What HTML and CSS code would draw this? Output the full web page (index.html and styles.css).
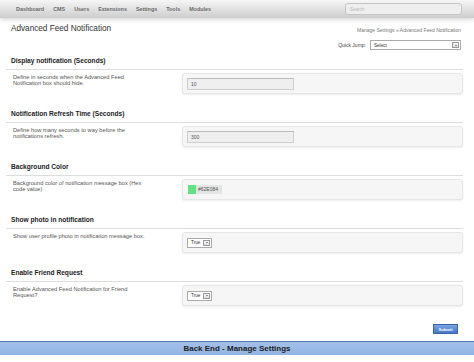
FILE: index.html
```html
<!DOCTYPE html>
<html lang="en">
<head>
    <meta charset="UTF-8">
    <meta name="viewport" content="width=device-width, initial-scale=1.0">
    <title>Manage Settings - Advanced Feed Notification</title>
    <link rel="stylesheet" href="styles.css">
</head>
<body>

    <!-- Top menu -->
    <div class="topbar">
        <ul class="menu">
            <li>Dashboard</li>
            <li>CMS</li>
            <li>Users</li>
            <li>Extensions</li>
            <li>Settings</li>
            <li>Tools</li>
            <li>Modules</li>
        </ul>
        <input type="text" class="search" placeholder="Search">
    </div>

    <div class="page-head">
        <h1>Advanced Feed Notification</h1>
        <div class="page-tools">
            <div class="crumbs">Manage Settings &raquo; Advanced Feed Notification</div>
            <div class="jump">
                <span>Quick Jump:</span>
                <div class="select wide"><span>Select</span><i class="arrow"></i></div>
            </div>
        </div>
    </div>

    <form class="settings">
        <div class="setting">
            <h2>Display notification (Seconds)</h2>
            <div class="setting-row">
                <p class="setting-desc">Define in seconds when the Advanced Feed Notification box should hide.</p>
                <div class="setting-field"><input type="text" class="text-input" value="10"></div>
            </div>
        </div>

        <div class="setting">
            <h2>Notification Refresh Time (Seconds)</h2>
            <div class="setting-row">
                <p class="setting-desc">Define how many seconds to way before the notifications refresh.</p>
                <div class="setting-field"><input type="text" class="text-input" value="300"></div>
            </div>
        </div>

        <div class="setting">
            <h2>Background Color</h2>
            <div class="setting-row">
                <p class="setting-desc">Background color of notification message box (Hex code value)</p>
                <div class="setting-field">
                    <span class="swatch"></span><span class="hex">#62E084</span>
                </div>
            </div>
        </div>

        <div class="setting">
            <h2>Show photo in notification</h2>
            <div class="setting-row">
                <p class="setting-desc">Show user profile photo in notification message box.</p>
                <div class="setting-field">
                    <div class="select"><span>True</span><i class="arrow"></i></div>
                </div>
            </div>
        </div>

        <div class="setting">
            <h2>Enable Friend Request</h2>
            <div class="setting-row">
                <p class="setting-desc">Enable Advanced Feed Notification for Friend Request?</p>
                <div class="setting-field">
                    <div class="select"><span>True</span><i class="arrow"></i></div>
                </div>
            </div>
        </div>

        <div class="actions">
            <button type="submit">Submit</button>
        </div>
    </form>

    <!-- Footer bar -->
    <div class="footer">Back End - Manage Settings</div>

</body>
</html>
```

FILE: styles.css
```css
body {
    margin: 0;
    background-color: #FFFFFF;
    font-family: 'Liberation Sans', Arial, sans-serif;
    color: #333;
}

.topbar {
    height: 18px;
    display: flex;
    align-items: center;
    justify-content: space-between;
    padding: 0 12px 0 16px;
    background: linear-gradient(#f6f6f6, #cdcdcd);
    box-shadow: 0 2px 4px rgba(0, 0, 0, 0.15);
}

.menu {
    display: flex;
    gap: 9px;
    margin: 0;
    padding: 0;
    list-style: none;
    font-size: 5.4px;
    font-weight: bold;
    color: #6a6a6a;
}

.search {
    width: 117px;
    height: 12px;
    box-sizing: border-box;
    padding: 0 4px;
    border: 1px solid #c6c6c6;
    border-radius: 3px;
    background-color: #eeeeee;
    font-family: inherit;
    font-size: 4.5px;
}

.search::placeholder {
    color: #bbb;
}

.page-head {
    display: flex;
    justify-content: space-between;
    padding: 6px 13px 0 11px;
}

h1 {
    margin: 0;
    font-size: 8.2px;
    font-weight: normal;
    line-height: 10px;
    color: #333;
}

.page-tools {
    display: flex;
    flex-direction: column;
    align-items: flex-end;
    gap: 7px;
    padding-top: 3px;
    font-size: 5px;
    color: #777;
}

.jump {
    display: flex;
    align-items: center;
    gap: 4px;
    color: #444;
}

/* fake select box */
.select {
    display: inline-flex;
    align-items: center;
    justify-content: space-between;
    height: 10px;
    box-sizing: border-box;
    padding: 0 1px 0 3px;
    gap: 3px;
    border: 1px solid #aaa;
    background-color: #fff;
    font-size: 4.6px;
    color: #333;
}

.select.wide {
    width: 91px;
}

.arrow {
    width: 7px;
    height: 6px;
    box-sizing: border-box;
    border: 1px solid #999;
    background: linear-gradient(#fafafa, #ddd);
    position: relative;
}

.arrow::after {
    content: "";
    position: absolute;
    left: 1.5px;
    top: 1.5px;
    border-left: 1.5px solid transparent;
    border-right: 1.5px solid transparent;
    border-top: 1.5px solid #333;
}

.settings {
    margin: 7px 11px 0 6px;
}

.setting {
    margin-bottom: 16px;
}

h2 {
    margin: 0;
    padding: 0 0 4px 5px;
    border-bottom: 1px solid #dddddd;
    font-size: 6.6px;
    line-height: 8px;
    color: #222;
}

.setting-row {
    display: flex;
    margin-top: 3px;
}

.setting-desc {
    flex: 0 0 135px;
    margin: 2px 34px 0 7px;
    font-size: 5.7px;
    line-height: 5.8px;
    color: #555;
}

.setting-field {
    flex: 1;
    display: flex;
    align-items: center;
    height: 21px;
    box-sizing: border-box;
    padding: 0 4px;
    border: 1px solid #e6e6e6;
    border-radius: 3px;
    background-color: #f6f6f6;
    box-shadow: 0 1px 2px rgba(0, 0, 0, 0.08);
}

.text-input {
    width: 107px;
    height: 12px;
    box-sizing: border-box;
    padding: 0 3px;
    border: 1px solid #cfcfcf;
    border-top-color: #bbb;
    background-color: #efefef;
    font-family: inherit;
    font-size: 5px;
    color: #555;
}

.swatch {
    width: 8px;
    height: 9px;
    margin-left: 1px;
    background-color: #62E084;
}

.hex {
    height: 9px;
    line-height: 9px;
    padding: 0 4px 0 2px;
    background-color: #e4e4e4;
    font-size: 5px;
    color: #555;
}

.actions {
    display: flex;
    justify-content: flex-end;
    padding: 2px 5px 7px 0;
}

button {
    width: 25px;
    height: 10px;
    padding: 0;
    border: 1px solid #3a63a8;
    background: linear-gradient(#7aa4e4, #4677c8);
    font-family: inherit;
    font-size: 4.2px;
    font-weight: bold;
    color: white;
    cursor: pointer;
}

.footer {
    height: 14px;
    box-sizing: border-box;
    border-top: 1px solid #5a7db5;
    background: linear-gradient(#a3c0ea, #92b3e2);
    text-align: center;
    font-size: 8px;
    font-weight: bold;
    line-height: 13px;
    color: #1e1e1e;
}
```
